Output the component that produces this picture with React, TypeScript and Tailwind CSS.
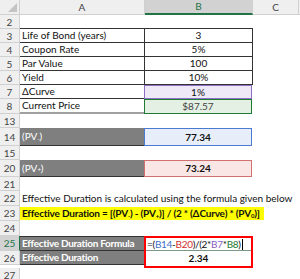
import React from "react";

const hdr = "w-[20px] shrink-0 bg-[#efefef] border-r border-b border-[#d0d0d0] text-[#444] text-center leading-none flex items-center justify-center";

function Sub({ children }: { children: React.ReactNode }) {
  return <sub className="text-[6px] align-baseline relative top-[2px]">{children}</sub>;
}

function Row({ num, h, children, active }: { num: string; h: string; children?: React.ReactNode; active?: boolean }) {
  return (
    <div className={`flex ${h}`}>
      <div className={active ? `${hdr} !bg-[#d2d2d2] !text-[#217346] !border-r-[#217346]` : hdr}>{num}</div>
      {children}
    </div>
  );
}

export default function App() {
  return (
    <div className="w-[300px] h-[279px] bg-white overflow-hidden text-[10px] text-[#111] font-['Lato',sans-serif]">
      {/* column headers */}
      <div className="flex h-[15px]">
        <div className="relative w-[20px] shrink-0 bg-[#efefef] border-r border-b border-[#d0d0d0]">
          <div className="absolute right-[2px] bottom-[2px] w-0 h-0 border-l-[9px] border-l-transparent border-b-[9px] border-b-[#c4c4c4]" />
        </div>
        <div className="w-[125px] shrink-0 bg-[#efefef] border-r border-b border-[#d0d0d0] text-[#444] flex items-center justify-center">A</div>
        <div className="w-[108px] shrink-0 bg-[#d2d2d2] border-r border-[#d0d0d0] border-b-2 border-b-[#217346] text-[#217346] flex items-center justify-center">B</div>
        <div className="w-[46px] shrink-0 bg-[#efefef] border-r border-b border-[#d0d0d0] text-[#444] flex items-center justify-center">C</div>
        <div className="flex-1 bg-[#efefef] border-b border-[#d0d0d0]" />
      </div>

      <Row num="2" h="h-[14px]">
        <div className="w-[125px] shrink-0 border-b border-[#333]" />
        <div className="w-[108px] shrink-0 border-b border-[#333]" />
      </Row>
      {[
        ["3", "Life of Bond (years)", "3"],
        ["4", "Coupon Rate", "5%"],
        ["5", "Par Value", "100"],
        ["6", "Yield", "10%"],
      ].map(([n, a, b]) => (
        <Row key={n} num={n} h="h-[14px]">
          <div className="w-[125px] shrink-0 border-b border-r border-[#333] pl-[2px] flex items-center">{a}</div>
          <div className="w-[108px] shrink-0 border-b border-r border-[#333] flex items-center justify-center">{b}</div>
        </Row>
      ))}
      <Row num="7" h="h-[14px]">
        <div className="w-[125px] shrink-0 border-b border-r border-[#333] pl-[2px] flex items-center">ΔCurve</div>
        <div className="w-[108px] shrink-0 -ml-px border border-[#8e6fc4] bg-[#efe9f7] flex items-center justify-center">1%</div>
      </Row>
      <Row num="8" h="h-[15px]">
        <div className="w-[125px] shrink-0 border-b-2 border-r border-b-[#a0a0a0] border-r-[#333] pl-[2px] flex items-center">Current Price</div>
        <div className="w-[108px] shrink-0 -ml-px border border-[#1e7b34] bg-[#e3f0e3] text-[#444] flex items-center justify-center">$87.57</div>
      </Row>
      <Row num="13" h="h-[14px]" />
      <Row num="14" h="h-[18px]">
        <div className="w-[125px] shrink-0 bg-[#7f7f7f] border-b border-[#333] text-white pl-[2px] flex items-center">
          (PV<Sub>-</Sub>)
        </div>
        <div className="w-[108px] shrink-0 -ml-px border border-[#4a7bd0] bg-[#e8eef9] font-bold flex items-center justify-center">77.34</div>
      </Row>
      <Row num="15" h="h-[14px]" />
      <Row num="20" h="h-[17px]">
        <div className="w-[125px] shrink-0 bg-[#7f7f7f] border-b border-[#333] text-white pl-[2px] flex items-center">
          (PV<Sub>+</Sub>)
        </div>
        <div className="w-[108px] shrink-0 -ml-px border border-[#d07070] bg-[#fbe6e6] font-bold flex items-center justify-center">73.24</div>
      </Row>
      <Row num="21" h="h-[14px]" />
      <Row num="22" h="h-[15px]">
        <div className="pl-[2px] flex items-center whitespace-nowrap">Effective Duration is calculated using the formula given below</div>
      </Row>
      <Row num="23" h="h-[15px]">
        <div className="py-[1px] flex items-center">
          <div className="h-full w-[244px] bg-[#ffff00] pl-[2px] font-bold tracking-[-0.2px] whitespace-nowrap flex items-center">
            Effective Duration = [(PV<Sub>-</Sub>) - (PV<Sub>+</Sub>)] / (2 * (ΔCurve) * (PV<Sub>0</Sub>)]
          </div>
        </div>
      </Row>
      <Row num="24" h="h-[15px]" />
      <div className="flex">
        <div className="flex flex-col">
          <Row num="25" h="h-[15px]" active>
            <div className="w-[125px] shrink-0 bg-[#7f7f7f] border-y border-[#333] text-white font-bold tracking-[-0.3px] pl-[2px] flex items-center whitespace-nowrap">
              Effective Duration Formula
            </div>
          </Row>
          <Row num="26" h="h-[14px]">
            <div className="w-[125px] shrink-0 bg-[#7f7f7f] border-b border-[#333] text-white font-bold tracking-[-0.3px] pl-[2px] flex items-center">
              Effective Duration
            </div>
          </Row>
        </div>
        <div className="w-[109px] -ml-px border-2 border-[#ff0000] flex flex-col">
          <div className="h-[13px] border-b border-[#7a9a86] pl-[1px] tracking-[-0.3px] flex items-center whitespace-nowrap">
            =(<span className="text-[#3f6fc8]">B14</span>-<span className="text-[#d03030]">B20</span>)/(2*
            <span className="text-[#8a5cc4]">B7</span>*<span className="text-[#1e7b34]">B8</span>)
            <span className="inline-block w-px h-[11px] bg-black ml-px" />
          </div>
          <div className="flex-1 font-bold flex items-center justify-center">2.34</div>
        </div>
      </div>
      <Row num="27" h="h-[14px]" />
    </div>
  );
}
